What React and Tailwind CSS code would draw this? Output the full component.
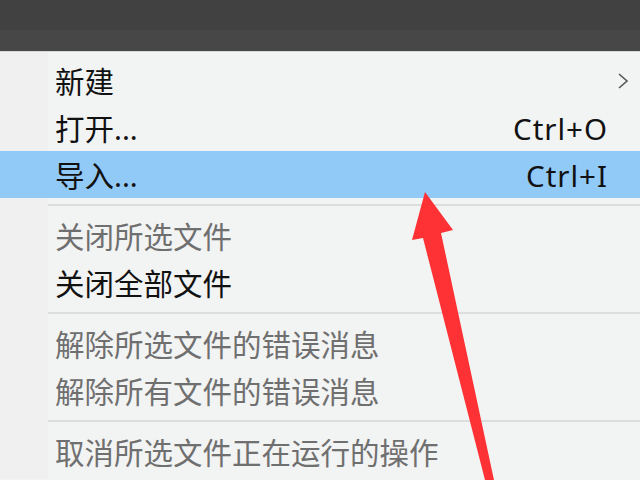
import React from 'react';

const font = { fontFamily: '"Noto Sans", "Noto Sans CJK SC", "Microsoft YaHei", sans-serif' };

const Row = ({ label, shortcut, sub, disabled, active }) => (
  <div
    className={`flex items-center h-[47px] pt-[3px] pl-[55px] pr-[33px] text-[29.5px] leading-none ${
      active ? 'bg-[#91c9f7]' : ''
    } ${disabled ? 'text-[#6f6f6f]' : 'text-[#111]'}`}
  >
    <span className="flex-1">{label}</span>
    {shortcut && <span className="tracking-[1px] mr-[-1px]">{shortcut}</span>}
    {sub && (
      <svg width="12" height="16" viewBox="0 0 12 16" className="mr-[-22px] mt-[-3px]">
        <path d="M2 1 L10 8 L2 15" fill="none" stroke="#555" strokeWidth="1.6" />
      </svg>
    )}
  </div>
);

const Sep = () => (
  <div className="py-[6px] pl-[48px]">
    <div className="h-[2px] bg-[#dcdede]" />
  </div>
);

export default function App() {
  return (
    <div className="relative w-[640px] h-[480px] overflow-hidden bg-[#f2f3f3]" style={font}>
      <div className="h-[52px] bg-[linear-gradient(to_bottom,#414141_30px,#474747_30px)] border-b border-[#d8d8d8]" />
      <div className="h-[427px] pt-[5px] bg-[linear-gradient(to_right,#f0f0f0_48px,#f2f3f3_48px)]">
        <Row label="新建" sub />
        <Row label="打开..." shortcut="Ctrl+O" />
        <Row label="导入..." shortcut="Ctrl+I" active />
        <Sep />
        <Row label="关闭所选文件" disabled />
        <Row label="关闭全部文件" />
        <Sep />
        <Row label="解除所选文件的错误消息" disabled />
        <Row label="解除所有文件的错误消息" disabled />
        <Sep />
        <Row label="取消所选文件正在运行的操作" disabled />
      </div>
      <svg className="absolute inset-0 pointer-events-none" width="640" height="480">
        <polygon
          points="425,192 453,230 441,233 494,480 485,480 423,238 412,240"
          fill="#fe3234"
        />
      </svg>
    </div>
  );
}
